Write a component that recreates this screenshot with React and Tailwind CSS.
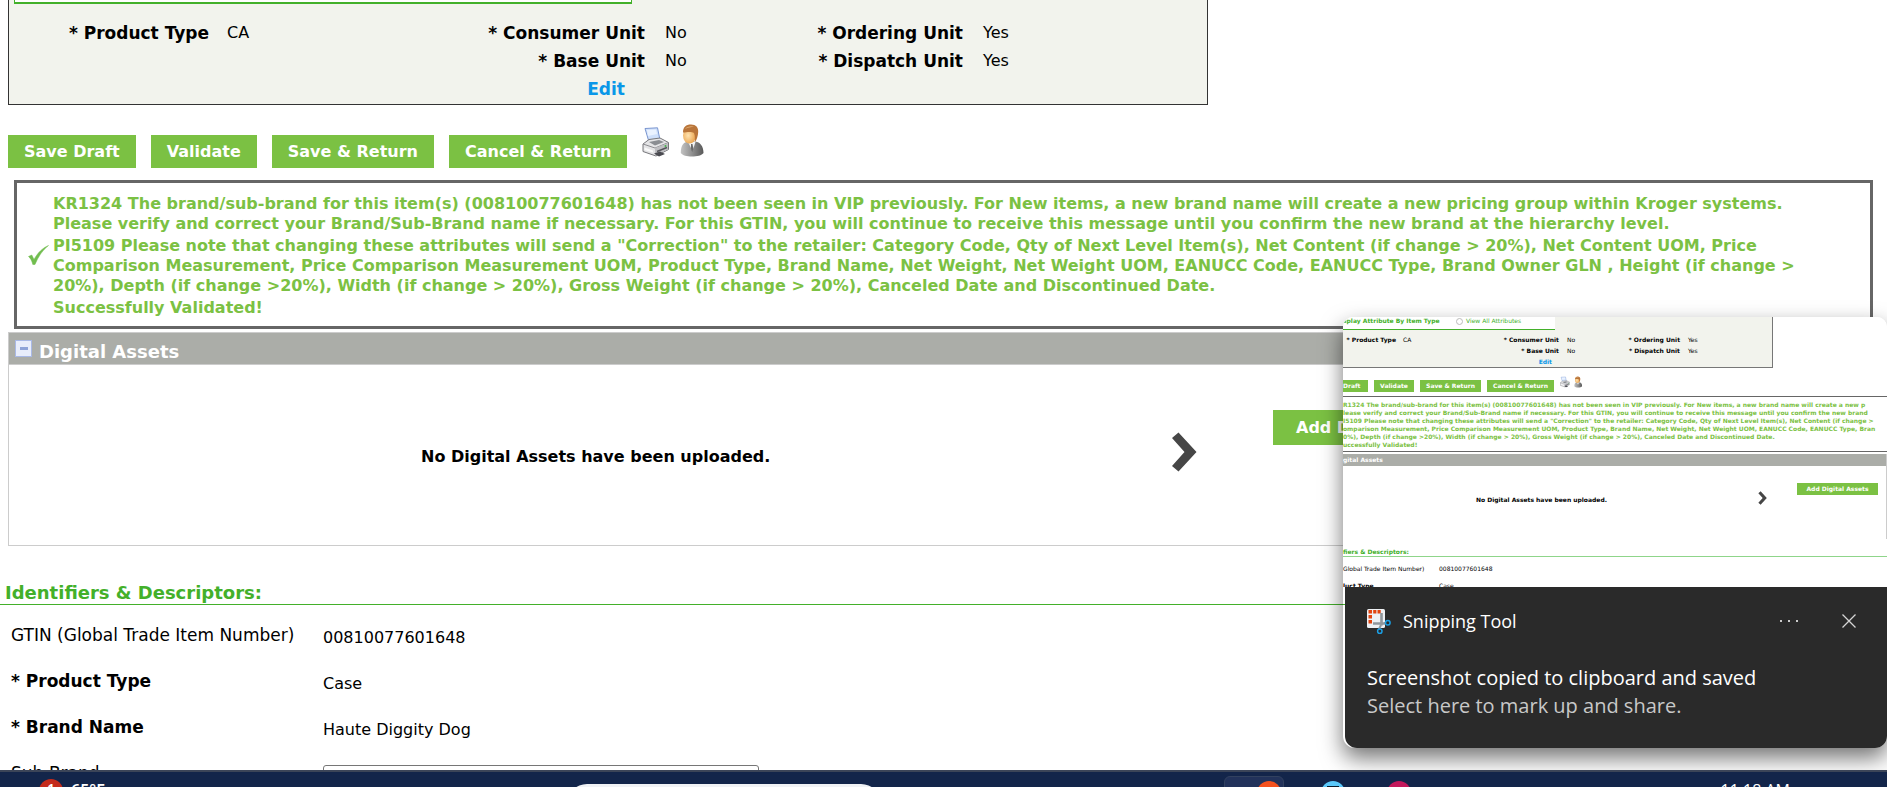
const sans = "font-['DejaVu_Sans',sans-serif]";

function PrinterIcon({ className }) {
  return (
    <svg viewBox="0 0 28 30" className={className} aria-hidden="true">
      <path d="M3 1.5 15.500 .8 18 13 7 15Z" fill="#cfe0fb" stroke="#7b96cf" strokeWidth="1" />
      <path d="M5 3 14 2.500 15 7 6 9Z" fill="#eaf2ff" />
      <path d="M1 17 7 12.500 18 11 26.500 15.500V22.500L14 29 1 24.500Z" fill="#e4e4e6" stroke="#77777b" strokeWidth="1" />
      <path d="M1 17 13 21 26.500 15.500" fill="none" stroke="#8c8c90" />
      <path d="M7 15 17 13 22 15 13 18.500Z" fill="#8a8d92" />
      <path d="M13 21V28.500L26 22.500V16Z" fill="#bebec2" />
      <path d="M15 24.500 25 20.500" stroke="#55555a" strokeWidth="1.500" />
      <path d="M12 26.500 18 24.500 23 27 17 29.500Z" fill="#4a4a50" />
      <circle cx="23.500" cy="19" r="1" fill="#43b649" />
      <path d="M2.500 20.500 11 23.500V25.500L2.500 23Z" fill="#fafafa" />
    </svg>
  );
}

function UserIcon({ className }) {
  return (
    <svg viewBox="0 0 26 33" className={className} aria-hidden="true">
      <defs>
        <linearGradient id="suit" x1="0" x2="1">
          <stop offset="0" stopColor="#c3c3c3" />
          <stop offset=".5" stopColor="#8f8f8f" />
          <stop offset="1" stopColor="#585858" />
        </linearGradient>
        <radialGradient id="face" cx=".4" cy=".5" r=".6">
          <stop offset="0" stopColor="#ffe3b0" />
          <stop offset="1" stopColor="#e9a24c" />
        </radialGradient>
      </defs>
      <path d="M.8 29C.8 21 4 17.500 9 17.500h5c6 0 9.500 4.500 9.500 11.500-3 4.500-19.500 5-22.700 0Z" fill="url(#suit)" />
      <path d="M8 18h7.500l-3 9Z" fill="#f4f4f4" />
      <path d="m11 20 1.500 0 1 5-1.300 3-1.200-3Z" fill="#6b6b6b" />
      <ellipse cx="9.500" cy="11.500" rx="6.500" ry="8" fill="url(#face)" />
      <path d="M3 8.500C3 3 6 .5 11 .5c5 0 7.500 3 7.200 7.500-.2 4-1.500 8-3.200 10-.5-3 .5-5.500-1-9-3-2-8-.5-11-.5Z" fill="#b9753a" />
      <path d="M5 5c2-3 7-3.500 9-2-3 0-6 .5-9 2Z" fill="#e0ad72" />
    </svg>
  );
}

function CheckIcon({ className }) {
  return (
    <svg viewBox="0 0 21 20" className={className} aria-hidden="true">
      <path d="M.5 11.500 3.800 10 6 14.500C9.500 8 14.500 3 20.500.5 14.500 5 10 12 7 19.500H4.800C4 16 2.500 13 .5 11.500Z" fill="#71bd4f" stroke="#71bd4f" strokeWidth=".5" />
    </svg>
  );
}

function Chevron({ className }) {
  return (
    <svg viewBox="0 0 26 40" className={className} aria-hidden="true">
      <path d="M1 6 7.500 .5 25.500 20 7.500 39.500 1 34 13.500 20Z" fill="#464646" />
    </svg>
  );
}

function SnipIcon({ className }) {
  return (
    <svg viewBox="0 0 24 26" className={className} aria-hidden="true">
      <rect x="0" y="1" width="18" height="19" rx="1.500" fill="#eef1f4" />
      <g fill="#e2440f">
        <rect x="1.500" y="2" width="3.500" height="3.500" />
        <rect x="6.200" y="2" width="3.200" height="3.500" />
        <rect x="10.500" y="2" width="3.200" height="3.500" />
        <rect x="1.500" y="7" width="3.500" height="3.500" />
        <rect x="1.500" y="12" width="3.500" height="3.500" />
      </g>
      <path d="M14.500 5v12.500M6 15.500h12" stroke="#8f969c" strokeWidth="2.600" />
      <path d="m14 17-2 4M17 15l2 0" stroke="#8f969c" strokeWidth="2" />
      <circle cx="20.800" cy="14.800" r="2.300" fill="none" stroke="#1b9fe4" strokeWidth="1.500" />
      <circle cx="12.800" cy="23.300" r="2.200" fill="none" stroke="#1b9fe4" strokeWidth="1.500" />
    </svg>
  );
}

const actions = ["Save Draft", "Validate", "Save & Return", "Cancel & Return"];
const notes = [
  'KR1324 The brand/sub-brand for this item(s) (00810077601648) has not been seen in VIP previously. For New items, a new brand name will create a new pricing group within Kroger systems. Please verify and correct your Brand/Sub-Brand name if necessary. For this GTIN, you will continue to receive this message until you confirm the new brand at the hierarchy level.',
  'PI5109 Please note that changing these attributes will send a "Correction" to the retailer: Category Code, Qty of Next Level Item(s), Net Content (if change > 20%), Net Content UOM, Price Comparison Measurement, Price Comparison Measurement UOM, Product Type, Brand Name, Net Weight, Net Weight UOM, EANUCC Code, EANUCC Type, Brand Owner GLN , Height (if change > 20%), Depth (if change >20%), Width (if change > 20%), Gross Weight (if change > 20%), Canceled Date and Discontinued Date.',
  "Successfully Validated!",
];

const previewNotes = [
  "R1324 The brand/sub-brand for this item(s) (00810077601648) has not been seen in VIP previously. For New items, a new brand name will create a new p",
  "lease verify and correct your Brand/Sub-Brand name if necessary. For this GTIN, you will continue to receive this message until you confirm the new brand",
  'I5109 Please note that changing these attributes will send a "Correction" to the retailer: Category Code, Qty of Next Level Item(s), Net Content (if change >',
  "omparison Measurement, Price Comparison Measurement UOM, Product Type, Brand Name, Net Weight, Net Weight UOM, EANUCC Code, EANUCC Type, Bran",
  "0%), Depth (if change >20%), Width (if change > 20%), Gross Weight (if change > 20%), Canceled Date and Discontinued Date.",
  "uccessfully Validated!",
];

function ItemSummary() {
  return (
    <section className="h-[105px] w-[1200px] border-x border-b border-[#333] bg-[#f2f3ed] px-[5px]">
      <div className="h-1 w-[618px] border-x border-b-2 border-[#43b02a] bg-white" />
      <div className="mt-[19px] grid grid-cols-[195px_240px_196px_118px_200px_1fr] gap-y-2 text-base leading-5">
        <b className="text-right text-[17px]">* Product Type</b>
        <span className="pl-[18px]">CA</span>
        <b className="text-right text-[17px]">* Consumer Unit</b>
        <span className="pl-5">No</span>
        <b className="text-right text-[17px]">* Ordering Unit</b>
        <span className="pl-5">Yes</span>
        <b className="col-start-3 text-right text-[17px]">* Base Unit</b>
        <span className="pl-5">No</span>
        <b className="text-right text-[17px]">* Dispatch Unit</b>
        <span className="pl-5">Yes</span>
        <a href="#edit" className="col-start-3 pr-5 text-right text-[17px] font-bold text-[#0a97e8]">Edit</a>
      </div>
    </section>
  );
}

function Preview() {
  return (
    <div className="h-[270px] overflow-hidden rounded-t-[10px] bg-white text-[6px] leading-2 whitespace-nowrap">
      <div className="h-[51px] w-[430px] border-r border-b border-[#777] bg-[#f2f3ed]">
        <div className="flex h-[13px] w-[212px] items-start border-b border-[#43b02a] bg-white text-[#43b02a]">
          <b className="w-[113px]">splay Attribute By Item Type</b>
          <label className="flex items-center gap-[3px]">
            <input type="radio" name="view" className="size-[7px] appearance-none rounded-full border border-[#bbb]" />
            View All Attributes
          </label>
        </div>
        <div className="mt-[6px] grid grid-cols-[53px_88px_75px_50px_71px_1fr] gap-y-[3px]">
          <b className="text-right">* Product Type</b>
          <span className="pl-[7px]">CA</span>
          <b className="text-right">* Consumer Unit</b>
          <span className="pl-2">No</span>
          <b className="text-right">* Ordering Unit</b>
          <span className="pl-2">Yes</span>
          <b className="col-start-3 text-right">* Base Unit</b>
          <span className="pl-2">No</span>
          <b className="text-right">* Dispatch Unit</b>
          <span className="pl-2">Yes</span>
          <b className="col-start-3 pr-[7px] text-right text-[#0a97e8]">Edit</b>
        </div>
      </div>
      <div className="mt-2 flex h-5 items-start gap-[6px]">
        <div className="mt-1 flex gap-[6px] font-bold text-white">
          <span className="w-[25px] bg-[#7bc143] py-[2px]">Draft</span>
          <span className="w-10 bg-[#7bc143] py-[2px] text-center">Validate</span>
          <span className="w-[61px] bg-[#7bc143] py-[2px] text-center">Save &amp; Return</span>
          <span className="w-[67px] bg-[#7bc143] py-[2px] text-center">Cancel &amp; Return</span>
        </div>
        <div className="flex gap-1">
          <PrinterIcon className="h-3 w-[10px]" />
          <UserIcon className="h-3 w-[9px]" />
        </div>
      </div>
      <div className="h-[56px] border-y border-[#666] pt-1 font-bold text-[#7bc143]">
        {previewNotes.map((line) => (
          <p key={line}>{line}</p>
        ))}
      </div>
      <div className="mt-[2px] border-r border-[#ccc]">
        <div className="h-3 bg-[#abada8] pt-[2px] font-bold text-white">gital Assets</div>
        <div className="flex h-[73px] items-start pl-[133px] font-bold">
          <span className="mt-[30px] w-[282px]">No Digital Assets have been uploaded.</span>
          <Chevron className="mt-[25px] h-[14px] w-[9px]" />
          <span className="mt-[17px] ml-[30px] w-[81px] bg-[#7bc143] py-[2px] text-center text-white">Add Digital Assets</span>
        </div>
      </div>
      <div className="mt-[9px] border-b border-[#8fd58a] font-bold text-[#43b02a]">fiers &amp; Descriptors:</div>
      <div className="mt-2 grid grid-cols-[96px_1fr] gap-y-[9px]">
        <span>Global Trade Item Number)</span>
        <span>00810077601648</span>
        <b>luct Type</b>
        <span>Case</span>
      </div>
    </div>
  );
}

function Toast() {
  return (
    <aside className="absolute top-[317px] right-0 w-[544px] rounded-t-[10px] rounded-b-xl shadow-[0_10px_22px_rgba(0,0,0,0.55)]">
      <Preview />
      <div className="ml-[2px] h-[161px] rounded-b-xl bg-[#2a2a2a] pr-[31px] pl-[22px] font-['Open_Sans',sans-serif] text-white">
        <div className="flex h-[68px] items-center">
          <SnipIcon className="h-[26px] w-6" />
          <span className="ml-3 flex-1 text-lg">Snipping Tool</span>
          <button aria-label="More" className="flex w-[18px] justify-between">
            <i className="size-[2px] bg-[#ccc]" />
            <i className="size-[2px] bg-[#ccc]" />
            <i className="size-[2px] bg-[#ccc]" />
          </button>
          <button aria-label="Close" className="ml-11">
            <svg viewBox="0 0 14 14" className="size-[14px]">
              <path d="m.5.5 13 13m0-13-13 13" stroke="#d5d5d5" strokeWidth="1.300" />
            </svg>
          </button>
        </div>
        <p className="mt-[9px] text-xl leading-7">Screenshot copied to clipboard and saved</p>
        <p className="text-xl leading-7 text-[#c8c8c8]">Select here to mark up and share.</p>
      </div>
    </aside>
  );
}

function Taskbar() {
  return (
    <footer className="absolute inset-x-0 bottom-0 flex h-[17px] items-start overflow-hidden border-t-2 border-[#3c4558] bg-[#13254a] font-['Open_Sans',sans-serif] text-white">
      <span className="mt-[7px] ml-[39px] flex size-6 shrink-0 justify-center rounded-full bg-[#c42b1c] pt-[2px] text-xs leading-4 font-bold">1</span>
      <span className="mt-2 ml-2 w-[38px] shrink-0 text-base leading-5 font-semibold">65°F</span>
      <span className="mt-3 ml-[458px] h-10 w-[314px] shrink-0 rounded-full bg-[#f0f2f5]" />
      <span className="mt-1 ml-[343px] flex h-12 w-[60px] shrink-0 rounded-md border border-[#32415f] bg-[#22325a] pt-1 pl-8">
        <i className="size-6 shrink-0 rounded-full bg-[#f4511e]" />
      </span>
      <span className="mt-[9px] ml-[37px] flex size-6 shrink-0 justify-center rounded-full bg-[#5ac8fa] pt-[5px]">
        <i className="h-3 w-3 bg-[#0a1a2a]" />
      </span>
      <span className="mt-[9px] ml-[42px] size-6 shrink-0 rounded-full bg-[#c2185b]" />
      <span className="mt-[6px] mr-[97px] ml-auto text-base leading-6">11:18 AM</span>
    </footer>
  );
}

export default function App() {
  return (
    <div className={`relative h-screen overflow-hidden bg-white text-black ${sans}`}>
      <main>
        <div className="pl-2">
          <ItemSummary />
          <div className="mt-[19px] flex h-[56px] items-start gap-[15px]">
            {actions.map((label) => (
              <button key={label} className="mt-[11px] h-[33px] bg-[#7bc143] px-4 text-base font-bold whitespace-nowrap text-white">
                {label}
              </button>
            ))}
            <div className="flex items-start gap-[10px]">
              <button aria-label="Print" className="mt-[3px]"><PrinterIcon className="h-[30px] w-7" /></button>
              <button aria-label="User"><UserIcon className="h-[33px] w-[26px]" /></button>
            </div>
          </div>
        </div>
        <section className="mr-[14px] ml-[14px] flex h-[149px] items-center border-3 border-[#666] pr-[31px] pl-[11px] text-[#7bc143]">
          <CheckIcon className="h-5 w-[21px] shrink-0" />
          <div className="ml-1 space-y-[2px] pt-[3px] text-base leading-5 font-bold">
            {notes.map((note) => (
              <p key={note}>{note}</p>
            ))}
          </div>
        </section>
        <section className="mt-[3px] ml-2 border border-[#ccc]">
          <h2 className="flex h-8 items-center border-b border-[#ccc] bg-[#abada8] pl-[6px] text-lg font-bold text-white">
            <button aria-label="Collapse" className="flex size-[17px] items-center justify-center border border-[#a9b9e6] bg-[#e8edfb]">
              <i className="h-[3px] w-2 bg-[#8ea3d8]" />
            </button>
            <span className="mt-[6px] ml-[7px]">Digital Assets</span>
          </h2>
          <div className="flex h-[180px] items-start font-bold">
            <p className="mt-[82px] ml-[412px] w-[750px] text-base leading-5">No Digital Assets have been uploaded.</p>
            <button aria-label="Next" className="mt-[67px]"><Chevron className="h-10 w-[26px]" /></button>
            <button className="mt-[45px] ml-[76px] h-[35px] bg-[#7bc143] px-[23px] text-base whitespace-nowrap text-white">Add Digital Assets</button>
          </div>
        </section>
        <section>
          <h2 className="mt-9 border-b border-[#43b02a] pl-[5px] text-lg leading-[22px] font-bold text-[#43b02a]">Identifiers &amp; Descriptors:</h2>
          <div className="grid grid-cols-[312px_436px] gap-y-[23px] pt-5 pl-[11px] text-base leading-5">
            <span className="text-[17px]">GTIN (Global Trade Item Number)</span>
            <span className="pt-[3px]">00810077601648</span>
            <b className="text-[17px]">* Product Type</b>
            <span className="pt-[3px]">Case</span>
            <b className="text-[17px]">* Brand Name</b>
            <span className="pt-[3px]">Haute Diggity Dog</span>
            <label htmlFor="sub" className="text-[17px]">Sub-Brand</label>
            <input id="sub" className="mt-[2px] h-7 rounded-[3px] border border-[#767676] px-2" />
          </div>
        </section>
      </main>
      <Toast />
      <Taskbar />
    </div>
  );
}
